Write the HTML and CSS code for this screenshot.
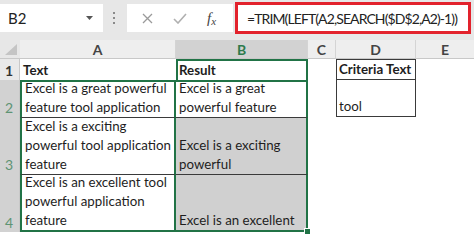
FILE: index.html
```html
<!DOCTYPE html>
<html>
<head>
<meta charset="utf-8">
<link rel="stylesheet" href="styles.css">
</head>
<body>
<div class="app">
  <div class="toolbar">
    <div class="namebox">
      <span class="ref">B2</span>
      <svg class="caret" width="7" height="4" viewBox="0 0 7 4"><path d="M0 0H7L3.5 4Z" fill="#555"/></svg>
    </div>
    <svg class="grip" width="3" height="12" viewBox="0 0 3 12"><rect x="0" y="0" width="2" height="2" fill="#8a8a8a"/><rect x="0" y="5" width="2" height="2" fill="#8a8a8a"/><rect x="0" y="10" width="2" height="2" fill="#8a8a8a"/></svg>
    <div class="fnbox">
      <svg class="icon-x" width="11" height="11" viewBox="0 0 11 11"><path d="M1 1L10 10M10 1L1 10" stroke="#9a9a9a" stroke-width="1.3" fill="none"/></svg>
      <svg class="icon-ok" width="14" height="11" viewBox="0 0 14 11"><path d="M1 6L5 10L13 1" stroke="#b0b0b0" stroke-width="1.6" fill="none"/></svg>
      <span class="fx"><i>f</i><i class="sub">x</i></span>
    </div>
    <div class="formula">=TRIM(LEFT(A2,SEARCH($D$2,A2)-1))</div>
  </div>
  <div class="sheet">
    <div class="corner"><svg width="12" height="11" viewBox="0 0 12 11"><path d="M12 0V11H0Z" fill="#c4c4c4"/></svg></div>
    <div class="colhead">A</div>
    <div class="colhead sel">B</div>
    <div class="colhead">C</div>
    <div class="colhead">D</div>
    <div class="colhead last">E</div>

    <div class="rowhead">1</div>
    <div class="cell bold">Text</div>
    <div class="cell bold b1">Result</div>
    <div class="cell"></div>
    <div class="cell bold crit">Criteria Text</div>
    <div class="cell"></div>

    <div class="rowhead sel">2</div>
    <div class="cell a first">Excel is a great powerful<br>feature tool application</div>
    <div class="cell b first">Excel is a great<br>powerful feature</div>
    <div class="cell"></div>
    <div class="cell tool">tool</div>
    <div class="cell"></div>

    <div class="rowhead sel">3</div>
    <div class="cell a mid">Excel is a exciting<br>powerful tool application<br>feature</div>
    <div class="cell b mid shade">Excel is a exciting<br>powerful</div>
    <div class="cell"></div>
    <div class="cell"></div>
    <div class="cell"></div>

    <div class="rowhead sel">4</div>
    <div class="cell a mid lastrow">Excel is an excellent tool<br>powerful application<br>feature</div>
    <div class="cell b mid lastrow shade">Excel is an excellent<span class="handle"></span></div>
    <div class="cell"></div>
    <div class="cell"></div>
    <div class="cell"></div>
  </div>
</div>
</body>
</html>
```
FILE: styles.css
```css
html, body {
  margin: 0;
  padding: 0;
  background: #ffffff;
}
.app {
  width: 474px;
  height: 237px;
  overflow: hidden;
  font-family: Lato, "Liberation Sans", sans-serif;
  font-size: 13.3px;
  color: #1e1e1e;
}
.toolbar {
  height: 40px;
  box-sizing: border-box;
  background: #e7e7e7;
  display: flex;
  align-items: flex-start;
  padding-top: 2px;
}
.namebox {
  margin-top: 2px;
  width: 103px;
  height: 28px;
  background: #fff;
  display: flex;
  align-items: center;
  justify-content: space-between;
  padding: 0 10px 0 8px;
  box-sizing: border-box;
}
.ref {
  font-size: 15px;
  color: #222;
}
.caret {
  margin-top: -1px;
}
.grip {
  margin: 10px 0 0 10px;
}
.fnbox {
  margin: 2px 0 0 11px;
  width: 106px;
  height: 28px;
  background: #fff;
  display: flex;
  align-items: center;
  padding-left: 15px;
  box-sizing: border-box;
}
.icon-ok {
  margin-left: 20px;
}
.fx {
  margin-left: 20px;
  font-family: "Liberation Serif", serif;
  font-size: 15px;
  color: #444;
  white-space: nowrap;
}
.fx .sub {
  font-size: 11px;
  position: relative;
  top: 2px;
}
.formula {
  margin-left: 2px;
  width: 236px;
  height: 32px;
  box-sizing: border-box;
  border: 3px solid #e2222c;
  background: #fff;
  display: flex;
  align-items: center;
  padding-left: 9px;
  font-size: 14px;
  letter-spacing: -0.9px;
  color: #222;
  white-space: nowrap;
}
.sheet {
  display: grid;
  grid-template-columns: 20px 156px 132px 28px 80px 58px;
  grid-template-rows: 19px 21px 37px 57px 58px;
  line-height: 19px;
}
.corner {
  background: #e7e7e7;
  border-bottom: 1px solid #c8c8c8;
  display: flex;
  align-items: flex-end;
  justify-content: flex-end;
  padding: 0 3px 3px 0;
  box-sizing: border-box;
}
.colhead {
  background: #eeeeee;
  border-right: 1px solid #d4d4d4;
  border-bottom: 1px solid #c8c8c8;
  box-sizing: border-box;
  text-align: center;
  font-weight: 700;
  color: #444;
  font-size: 14px;
  line-height: 19px;
}
.colhead.sel {
  background: #d2d2d2;
  color: #2d7a4c;
}
.colhead.last {
  border-right: none;
}
.rowhead {
  background: #e9e9e9;
  border-right: 1px solid #c8c8c8;
  box-sizing: border-box;
  display: flex;
  align-items: flex-end;
  padding-left: 5px;
  font-weight: 700;
  font-size: 14px;
  color: #333;
}
.rowhead.sel {
  background: #d2d2d2;
  color: #5e9474;
  font-weight: 400;
}
.cell {
  box-sizing: border-box;
  display: flex;
  flex-direction: column;
  justify-content: flex-end;
  padding-left: 3px;
  white-space: nowrap;
  overflow: hidden;
  position: relative;
}
.cell.bold {
  font-weight: 700;
}
.b1 {
  border: 2px solid #217346;
  border-bottom: none;
  padding-left: 1px;
}
.crit {
  border: 1px solid #3a3a3a;
  padding-left: 2px;
  overflow: visible;
}
.tool {
  border: 1px solid #3a3a3a;
  border-top: none;
  padding-left: 2px;
}
.a {
  border-left: 2px solid #217346;
  border-right: 2px solid #217346;
  padding-left: 3px;
}
.b {
  border-right: 2px solid #217346;
  padding-left: 3px;
}
.first {
  border-top: 2px solid #217346;
}
.mid {
  border-top: 1px solid #3a3a3a;
}
.lastrow {
  border-bottom: 2px solid #217346;
}
.shade {
  background: #d0d0d0;
}
.cell.b.lastrow {
  overflow: visible;
}
.handle {
  position: absolute;
  right: -5px;
  bottom: -5px;
  width: 5px;
  height: 5px;
  background: #217346;
  border: 1px solid #fff;
}
```
